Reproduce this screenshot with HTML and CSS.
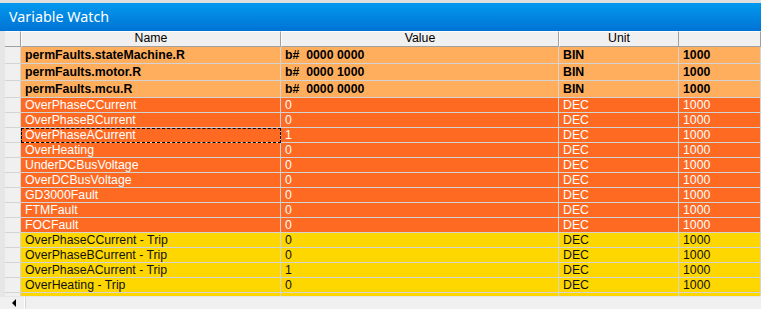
FILE: index.html
```html
<!DOCTYPE html>
<html>
<head>
<meta charset="utf-8">
<link rel="stylesheet" href="styles.css">
</head>
<body>
<div class="window">
  <div class="topstrip"></div>
  <div class="titlebar">Variable Watch</div>
  <div class="gridwrap">
    <div class="grid">
      <div class="row head">
        <div class="c rh"></div>
        <div class="c name">Name</div>
        <div class="c val">Value</div>
        <div class="c unit">Unit</div>
        <div class="c last"></div>
      </div>
      <div class="row bold lo">
        <div class="c rh"></div><div class="c name">permFaults.stateMachine.R</div><div class="c val">b#&nbsp; 0000 0000</div><div class="c unit">BIN</div><div class="c last">1000</div>
      </div>
      <div class="row bold lo">
        <div class="c rh"></div><div class="c name">permFaults.motor.R</div><div class="c val">b#&nbsp; 0000 1000</div><div class="c unit">BIN</div><div class="c last">1000</div>
      </div>
      <div class="row bold lo">
        <div class="c rh"></div><div class="c name">permFaults.mcu.R</div><div class="c val">b#&nbsp; 0000 0000</div><div class="c unit">BIN</div><div class="c last">1000</div>
      </div>
      <div class="row or"><div class="c rh"></div><div class="c name">OverPhaseCCurrent</div><div class="c val">0</div><div class="c unit">DEC</div><div class="c last">1000</div></div>
      <div class="row or"><div class="c rh"></div><div class="c name">OverPhaseBCurrent</div><div class="c val">0</div><div class="c unit">DEC</div><div class="c last">1000</div></div>
      <div class="row or"><div class="c rh"></div><div class="c name focus">OverPhaseACurrent</div><div class="c val">1</div><div class="c unit">DEC</div><div class="c last">1000</div></div>
      <div class="row or"><div class="c rh"></div><div class="c name">OverHeating</div><div class="c val">0</div><div class="c unit">DEC</div><div class="c last">1000</div></div>
      <div class="row or"><div class="c rh"></div><div class="c name">UnderDCBusVoltage</div><div class="c val">0</div><div class="c unit">DEC</div><div class="c last">1000</div></div>
      <div class="row or"><div class="c rh"></div><div class="c name">OverDCBusVoltage</div><div class="c val">0</div><div class="c unit">DEC</div><div class="c last">1000</div></div>
      <div class="row or"><div class="c rh"></div><div class="c name">GD3000Fault</div><div class="c val">0</div><div class="c unit">DEC</div><div class="c last">1000</div></div>
      <div class="row or"><div class="c rh"></div><div class="c name">FTMFault</div><div class="c val">0</div><div class="c unit">DEC</div><div class="c last">1000</div></div>
      <div class="row or"><div class="c rh"></div><div class="c name">FOCFault</div><div class="c val">0</div><div class="c unit">DEC</div><div class="c last">1000</div></div>
      <div class="row ye"><div class="c rh"></div><div class="c name">OverPhaseCCurrent - Trip</div><div class="c val">0</div><div class="c unit">DEC</div><div class="c last">1000</div></div>
      <div class="row ye"><div class="c rh"></div><div class="c name">OverPhaseBCurrent - Trip</div><div class="c val">0</div><div class="c unit">DEC</div><div class="c last">1000</div></div>
      <div class="row ye"><div class="c rh"></div><div class="c name">OverPhaseACurrent - Trip</div><div class="c val">1</div><div class="c unit">DEC</div><div class="c last">1000</div></div>
      <div class="row ye"><div class="c rh"></div><div class="c name">OverHeating - Trip</div><div class="c val">0</div><div class="c unit">DEC</div><div class="c last">1000</div></div>
      <div class="row ye stub"><div class="c rh"></div><div class="c name"></div><div class="c val"></div><div class="c unit"></div><div class="c last"></div></div>
    </div>
  </div>
  <div class="hscroll">
    <div class="arrowbox"><span class="arrow"></span></div>
    <div class="track"></div>
  </div>
</div>
</body>
</html>
```
FILE: styles.css
```css
html, body {
  margin: 0;
  padding: 0;
  background: #f0f0f0;
}
.window {
  width: 761px;
  height: 309px;
  overflow: hidden;
  display: flex;
  flex-direction: column;
  font-family: "Liberation Sans", Arial, sans-serif;
  font-size: 12.3px;
}
.topstrip {
  height: 3px;
  background: #dedede;
  flex: none;
}
.titlebar {
  flex: none;
  height: 28px;
  box-sizing: border-box;
  padding: 5px 0 0 9px;
  background: linear-gradient(#0399ef, #0073d5);
  color: #fff;
  font-family: "Noto Sans", "Open Sans", sans-serif;
  font-size: 14.3px;
  line-height: 18px;
}
.gridwrap {
  flex: none;
  height: 265px;
  overflow: hidden;
  background: #e6e6e6;
  padding-left: 5px;
}
.grid {
  display: flex;
  flex-direction: column;
}
.row {
  display: grid;
  grid-template-columns: 16px 260px 278px 120px 1fr;
  height: 15px;
  flex: none;
}
.c {
  box-sizing: border-box;
  border-right: 1px solid #d4d4d4;
  border-bottom: 1px solid #d4d4d4;
  padding-left: 4px;
  white-space: nowrap;
  overflow: hidden;
  line-height: 14px;
}
.c.rh {
  background: #f0f0f0;
  padding: 0;
}
.row.head {
  height: 16px;
  background: #f0f0f0;
}
.row.head .c {
  border-top: 1px solid #fdfdfd;
  border-bottom: 1px solid #a0a0a0;
  border-right: 1px solid #a0a0a0;
  text-align: center;
  padding: 0;
  line-height: 13px;
  color: #000;
}
.row.head .c.name,
.row.head .c.val,
.row.head .c.unit {
  border-left: 1px solid #fdfdfd;
}
.row.bold {
  height: 17px;
  font-weight: bold;
  color: #000;
}
.row.bold .c {
  line-height: 16px;
}
.lo .c:not(.rh) { background: #ffae5e; }
.or .c:not(.rh) { background: #ff6a22; color: #fff; }
.ye .c:not(.rh) { background: #ffd700; color: #111; }
.c.focus {
  outline: 1px dashed #000;
  outline-offset: -1px;
}
.hscroll {
  flex: 1;
  display: flex;
  background: #f0f0f0;
  border-top: 1px solid #e6e6e6;
}
.arrowbox {
  width: 25px;
  flex: none;
  display: flex;
  align-items: center;
  justify-content: center;
  border-right: 1px solid #ffffff;
  box-sizing: border-box;
}
.arrow {
  width: 0;
  height: 0;
  border-top: 4px solid transparent;
  border-bottom: 4px solid transparent;
  border-right: 4px solid #000;
  margin-left: 4px;
}
.track {
  flex: 1;
  border-left: 1px solid #d8d8d8;
}
```
